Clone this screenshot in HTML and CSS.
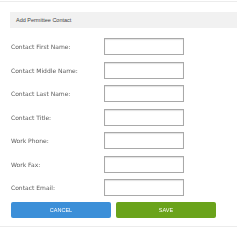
FILE: index.html
```html
<!DOCTYPE html>
<html lang="en">
<head>
  <meta charset="UTF-8" />
  <title>Add Permittee Contact</title>
  <link rel="stylesheet" href="styles.css">
</head>
<body>
  <div class="panel">
    <div class="panel-title">Add Permittee Contact</div>

    <form class="contact-form">
      <div class="row">
        <label for="firstName">Contact First Name:</label>
        <input type="text" id="firstName" />
      </div>
      <div class="row">
        <label for="middleName">Contact Middle Name:</label>
        <input type="text" id="middleName" />
      </div>
      <div class="row">
        <label for="lastName">Contact Last Name:</label>
        <input type="text" id="lastName" />
      </div>
      <div class="row">
        <label for="title">Contact Title:</label>
        <input type="text" id="title" />
      </div>
      <div class="row">
        <label for="phone">Work Phone:</label>
        <input type="text" id="phone" />
      </div>
      <div class="row">
        <label for="fax">Work Fax:</label>
        <input type="text" id="fax" />
      </div>
      <div class="row">
        <label for="email">Contact Email:</label>
        <input type="text" id="email" />
      </div>

      <div class="actions">
        <button type="button" class="btn btn-cancel">CANCEL</button>
        <button type="submit" class="btn btn-save">SAVE</button>
      </div>
    </form>
  </div>
</body>
</html>
```

FILE: styles.css
```css
body {
  margin: 0;
  padding: 0;
  background: #fff;
  font-family: 'DejaVu Sans', Verdana, sans-serif;
}

.panel {
  margin-top: 1px;
  height: 226px;
  box-sizing: border-box;
  border-top: 1px solid #ececec;
  border-bottom: 1px solid #ececec;
  padding-top: 10px;
}

.panel-title {
  margin-left: 10px;
  height: 16px;
  line-height: 16px;
  padding-left: 6px;
  background: #f1f1f1;
  font-family: 'Liberation Sans', Arial, sans-serif;
  font-size: 5.5px;
  color: #444;
}

.contact-form {
  padding: 10px 0 0 11px;
  will-change: transform;
}

.row {
  display: flex;
  align-items: center;
  height: 17px;
  margin-bottom: 6.5px;
}

.row label {
  width: 93px;
  font-size: 6px;
  color: #5a5a5a;
}

.row input {
  width: 80px;
  height: 17px;
  box-sizing: border-box;
  margin: 0;
  padding: 0 3px;
  border: 1px solid #a9a9a9;
  box-shadow: inset 0 1px 1px #e2e2e2;
  background: #fff;
}

.actions {
  display: flex;
  gap: 5px;
  margin-top: -0.5px;
}

.btn {
  width: 100px;
  height: 16px;
  border: none;
  border-radius: 2px;
  color: #fff;
  font-family: 'Liberation Sans', Arial, sans-serif;
  font-size: 5.5px;
  padding: 0;
  cursor: pointer;
}

.btn-cancel {
  background: #3c8fd8;
}

.btn-save {
  background: #6aa31b;
}
```
